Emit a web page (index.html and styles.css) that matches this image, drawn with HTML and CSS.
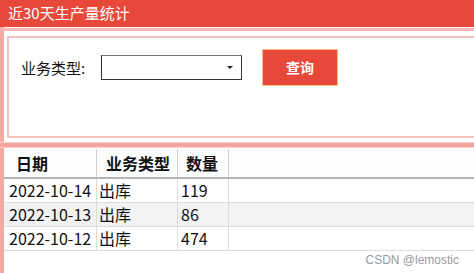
FILE: index.html
```html
<!DOCTYPE html>
<html lang="zh">
<head>
<meta charset="utf-8">
<link rel="stylesheet" href="styles.css">
</head>
<body>
<div class="window">
  <div class="titlebar">近30天生产量统计</div>
  <div class="frame">
    <div class="topline"></div>
    <div class="panel">
      <div class="form-row">
        <span class="label">业务类型:</span>
        <div class="select"><span class="arrow"></span></div>
        <button class="btn">查询</button>
      </div>
    </div>
    <div class="splitter"></div>
    <div class="grid">
      <div class="row head">
        <div class="c c1">日期</div>
        <div class="c c2">业务类型</div>
        <div class="c c3">数量</div>
        <div class="c rest"></div>
      </div>
      <div class="row">
        <div class="c c1">2022-10-14</div>
        <div class="c c2">出库</div>
        <div class="c c3">119</div>
        <div class="c rest"></div>
      </div>
      <div class="row alt">
        <div class="c c1">2022-10-13</div>
        <div class="c c2">出库</div>
        <div class="c c3">86</div>
        <div class="c rest"></div>
      </div>
      <div class="row">
        <div class="c c1">2022-10-12</div>
        <div class="c c2">出库</div>
        <div class="c c3">474</div>
        <div class="c rest"></div>
      </div>
    </div>
    <div class="watermark">CSDN @lemostic</div>
  </div>
</div>
</body>
</html>
```

FILE: styles.css
```css
html, body {
  margin: 0;
  padding: 0;
  background: #fff;
  font-family: "Noto Sans CJK SC", "Noto Sans", sans-serif;
  color: #111;
}
.window {
  width: 474px;
  height: 273px;
  overflow: hidden;
  display: flex;
  flex-direction: column;
}
.titlebar {
  height: 27px;
  background: #e8483a;
  color: #fff;
  font-size: 15px;
  line-height: 26px;
  padding-left: 8px;
  flex: none;
}
.frame {
  flex: 1;
  border-left: 4px solid #f6a9a3;
  display: flex;
  flex-direction: column;
  position: relative;
}
.topline {
  height: 3px;
  margin-top: 1px;
  background: #f7b7b2;
  margin-left: -4px;
}
.panel {
  margin: 5px 0 0 3px;
  height: 98px;
  border: 2px solid #f6c0bc;
  border-right: none;
  background: #fff;
}
.form-row {
  display: flex;
  align-items: center;
  height: 36px;
  margin-top: 11px;
  padding-left: 12px;
}
.label {
  font-size: 15px;
  width: 80px;
}
.select {
  width: 139px;
  height: 23px;
  border: 1px solid #333;
  border-top-color: #777;
  position: relative;
  margin-right: 20px;
}
.arrow {
  position: absolute;
  right: 8px;
  top: 10px;
  width: 0;
  height: 0;
  border-left: 3px solid transparent;
  border-right: 3px solid transparent;
  border-top: 3px solid #222;
}
.btn {
  width: 76px;
  height: 37px;
  background: #e8483a;
  border: 1px solid #f8c27a;
  color: #fff;
  font-family: "Noto Sans CJK SC", sans-serif;
  font-size: 14px;
  font-weight: bold;
  padding: 0;
}
.splitter {
  margin-top: 4px;
  height: 4px;
  border-top: 1px solid #fbd3d0;
  border-bottom: 1px solid #fbd3d0;
  background: #f6a29c;
  margin-left: -4px;
}
.grid {
  margin-top: 1px;
  display: flex;
  flex-direction: column;
}
.row {
  display: flex;
  height: 23px;
  border-bottom: 1px solid #dcdcdc;
  font-size: 16px;
  line-height: 23px;
}
.row.alt {
  background: #f2f2f2;
}
.row.head {
  height: 28px;
  line-height: 28px;
  border-bottom: 2px solid #b5b5b5;
  background: #fcfdff;
  font-weight: bold;
}
.c {
  border-right: 1px solid #dcdcdc;
  white-space: nowrap;
  overflow: hidden;
}
.head .c {
  border-right-color: #d0d0d0;
}
.c1 { width: 87px; padding-left: 5px; }
.head .c1 { padding-left: 12px; width: 80px; }
.c2 { width: 78px; padding-left: 2px; }
.head .c2 { padding-left: 9px; width: 71px; }
.c3 { width: 47px; padding-left: 3px; }
.head .c3 { padding-left: 8px; width: 42px; }
.rest { flex: 1; border-right: none; }
.watermark {
  position: absolute;
  right: 15px;
  bottom: 6px;
  font-family: "Liberation Sans", Arial, sans-serif;
  font-size: 12px;
  color: #9a9a9a;
}
```
